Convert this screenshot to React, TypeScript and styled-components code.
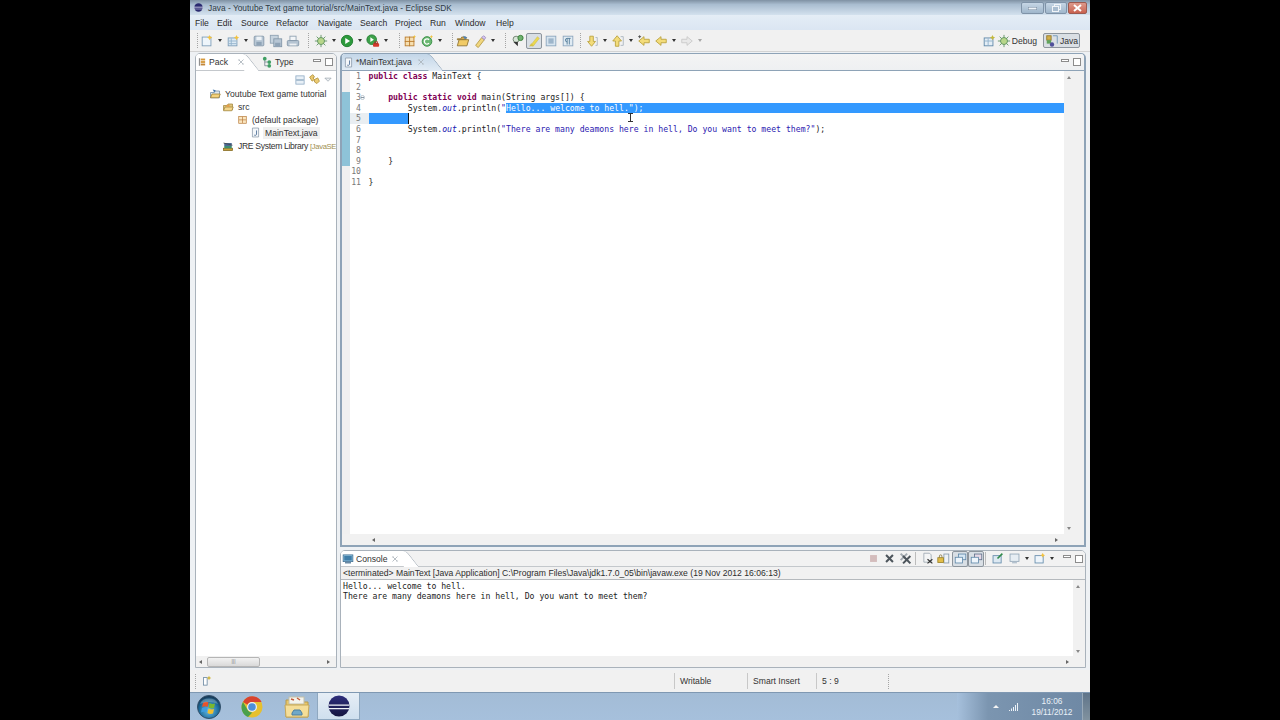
import React from "react";
import styled, { createGlobalStyle } from "styled-components";

const GlobalStyle = createGlobalStyle`
  html, body { margin: 0; padding: 0; background: #000; }
  body { font-family: "Liberation Sans", Arial, sans-serif; font-size: 8.6px; color: #333; }
  svg { flex: none; }
`;

const Screen = styled.div`
  width: 1280px;
  height: 720px;
  display: flex;
  justify-content: center;
  overflow: hidden;
`;

const Win = styled.div`
  width: 900px;
  height: 720px;
  display: flex;
  flex-direction: column;
  background: #f0f0f0;
`;

/* title bar */
const TitleBar = styled.div`
  height: 15px;
  display: flex;
  align-items: center;
  padding-left: 4px;
  gap: 5px;
  background: linear-gradient(#7f91a3, #a9bdd0 30%, #d3e1ee);
  color: #2f3a44;
`;

const TitleText = styled.span`
  flex: 1;
  font-size: 8.35px;
`;

const Controls = styled.div`
  display: flex;
  align-self: flex-start;
  gap: 1px;
  margin-right: 3px;
  margin-top: 2px;
`;

const Ctl = styled.div<{ $close?: boolean; $w: number }>`
  width: ${(p) => p.$w}px;
  height: 12px;
  box-sizing: border-box;
  display: flex;
  align-items: center;
  justify-content: center;
  border: 1px solid ${(p) => (p.$close ? "#9c5a50" : "#7f93a8")};
  border-radius: 2px;
  background: ${(p) => (p.$close ? "linear-gradient(#dd9a8c,#c9614f)" : "linear-gradient(#c6d6e5,#9fb6cb)")};
`;

const MenuBar = styled.div`
  height: 15px;
  display: flex;
  align-items: center;
  background: linear-gradient(#e4edf6, #dbe6f2);
  padding-left: 5px;
  color: #2b2b2b;
`;

const MenuItem = styled.span<{ $w: number }>`
  width: ${(p) => p.$w}px;
`;

/* toolbar */
const ToolBar = styled.div`
  height: 22px;
  display: flex;
  align-items: center;
  padding-left: 7px;
  background: #f1f1f1;
  border-bottom: 1px solid #d3d3d3;
  box-sizing: border-box;
`;

const ToolGroup = styled.div`
  display: flex;
  align-items: center;
  gap: 1px;
`;

const Slot = styled.div<{ $on?: boolean; $size?: number }>`
  width: ${(p) => p.$size ?? 16}px;
  height: 16px;
  display: flex;
  align-items: center;
  justify-content: center;
  flex: none;
  box-sizing: border-box;
  ${(p) => (p.$on ? "background:#d9dfe5;border:1px solid #8d959d;border-radius:2px;" : "")}
`;

const DropArrow = styled.div<{ $pale?: boolean }>`
  width: 8px;
  height: 16px;
  flex: none;
  display: flex;
  align-items: center;
  justify-content: center;

  &::before {
    content: "";
    border-left: 2.5px solid transparent;
    border-right: 2.5px solid transparent;
    border-top: 3px solid ${(p) => (p.$pale ? "#a8a8a8" : "#333")};
  }
`;

const Grip = styled.div<{ $l: number; $r: number }>`
  width: 1px;
  height: 15px;
  flex: none;
  box-sizing: border-box;
  margin: 0 ${(p) => p.$r}px 0 ${(p) => p.$l}px;
  border-left: 1px dotted #a5a5a5;
`;

const Perspectives = styled.div`
  margin-left: auto;
  margin-right: 10px;
  display: flex;
  align-items: center;
`;

const PerspLabel = styled.span`
  margin: 0 6px 0 1px;
  color: #333;
`;

const JavaButton = styled.div`
  width: 37px;
  height: 15px;
  display: flex;
  align-items: center;
  gap: 1px;
  padding-left: 1px;
  box-sizing: border-box;
  background: #dadfe4;
  border: 1px solid #8d959d;
  border-radius: 2px;
`;

/* panes */
const Work = styled.div`
  flex: 1;
  min-height: 0;
  display: flex;
  gap: 3px;
  padding: 1px 4px 2px 5px;
  background: #eef1f4;
`;

const Pane = styled.div`
  display: flex;
  flex-direction: column;
  box-sizing: border-box;
  border: 1px solid #a9b2bb;
  border-radius: 5px 5px 0 0;
  background: #fff;
  min-height: 0;
  overflow: hidden;
`;

const LeftPane = styled(Pane)`
  width: 142px;
  flex: none;
`;

const RightCol = styled.div`
  flex: 1;
  min-width: 0;
  display: flex;
  flex-direction: column;
  gap: 3px;
`;

const EditorPane = styled(Pane)`
  height: 494px;
  flex: none;
  border: 2px solid #8ea3b7;
  border-top-width: 1px;
`;

const ConsolePane = styled(Pane)`
  flex: 1;
`;

const TabStrip = styled.div<{ $h: number; $blue?: boolean }>`
  height: ${(p) => p.$h}px;
  flex: none;
  display: flex;
  align-items: center;
  box-sizing: border-box;
  background: ${(p) => (p.$blue ? "linear-gradient(#f4f4f4,#eef0f2)" : "#f2f2f2")};
  border-bottom: 1px solid ${(p) => (p.$blue ? "#8ea3b7" : "#c4c8cc")};
`;

const Tab = styled.div<{ $w: number; $pad?: number; $active?: boolean; $blue?: boolean }>`
  width: ${(p) => p.$w}px;
  height: 100%;
  flex: none;
  position: relative;
  z-index: 1;
  display: flex;
  align-items: center;
  gap: 2px;
  padding-left: ${(p) => p.$pad ?? 1}px;
  box-sizing: border-box;
  background: ${(p) =>
    p.$blue ? "linear-gradient(#c3d6e8,#e2ecf5)" : p.$active ? "#fff" : "transparent"};

  ${(p) =>
    p.$active
      ? `&::after {
    content: "";
    position: absolute;
    top: 0;
    bottom: -1px;
    right: -7px;
    width: 14px;
    transform: skewX(38deg);
    border-right: 1px solid ${p.$blue ? "#8ea3b7" : "#a9b2bb"};
    border-top-right-radius: 4px;
    background: ${p.$blue ? "linear-gradient(#c3d6e8,#e2ecf5)" : "#fff"};
    z-index: -1;
  }`
      : ""}
`;

const CloseX = styled.span<{ $ml: number }>`
  margin-left: ${(p) => p.$ml}px;
  display: flex;
`;

const PaneButtons = styled.div<{ $r: number }>`
  margin-left: auto;
  display: flex;
  align-items: center;
  gap: 4px;
  padding-right: ${(p) => p.$r}px;
`;

const MiniMin = styled.div`
  width: 8px;
  height: 3px;
  box-sizing: border-box;
  border: 1px solid #8c8c8c;
  background: #fff;
  margin-top: -4px;
`;

const MiniMax = styled.div`
  width: 8px;
  height: 8px;
  box-sizing: border-box;
  border: 1px solid #8c8c8c;
  background: #fff;
`;

const ViewBar = styled.div`
  height: 17px;
  flex: none;
  display: flex;
  align-items: center;
  justify-content: flex-end;
  padding-right: 2px;
`;

const Tree = styled.div`
  flex: 1;
  min-height: 0;
  overflow: hidden;
`;

const TreeRow = styled.div<{ $indent: number }>`
  height: 12.8px;
  display: flex;
  align-items: center;
  padding-left: ${(p) => p.$indent}px;
  gap: 2px;
  white-space: nowrap;
`;

const TreeLabel = styled.span<{ $selected?: boolean; $tight?: boolean }>`
  color: #333;
  padding: 1px ${(p) => (p.$tight ? 0 : 2)}px 1px 2px;
  letter-spacing: ${(p) => (p.$tight ? "-0.33px" : "normal")};
  background: ${(p) => (p.$selected ? "#f0f0f0" : "transparent")};
`;

const Decoration = styled.span`
  color: #a08f50;
  font-size: 7.6px;
`;

const HBar = styled.div`
  height: 11px;
  flex: none;
  display: flex;
  align-items: center;
  background: #f1f1f1;
  box-sizing: border-box;
`;

const ArrowH = styled.div<{ $dir: "l" | "r"; $ml?: number; $mr?: number }>`
  flex: none;
  margin-left: ${(p) => p.$ml ?? 0}px;
  margin-right: ${(p) => p.$mr ?? 0}px;
  border-top: 2.5px solid transparent;
  border-bottom: 2.5px solid transparent;
  ${(p) => (p.$dir === "l" ? "border-right: 3px solid #666;" : "border-left: 3px solid #666;")}
`;

const ArrowV = styled.div<{ $dir: "u" | "d" }>`
  flex: none;
  border-left: 2.5px solid transparent;
  border-right: 2.5px solid transparent;
  ${(p) => (p.$dir === "u" ? "border-bottom: 3px solid #888;" : "border-top: 3px solid #888;")}
`;

const Thumb = styled.div`
  width: 53px;
  height: 10px;
  margin-left: 5px;
  border: 1px solid #b5b5b5;
  border-radius: 2px;
  box-sizing: border-box;
  background: linear-gradient(#f2f2f2, #d9d9d9);
  display: flex;
  align-items: center;
  justify-content: center;
  font-size: 5px;
  line-height: 1;
  color: #777;
`;

/* editor */
const EditorBody = styled.div`
  flex: 1;
  min-height: 0;
  display: flex;
  position: relative;
`;

const EditorMain = styled.div`
  flex: 1;
  min-width: 0;
  display: flex;
  flex-direction: column;
`;

const EditorText = styled.div`
  flex: 1;
  min-height: 0;
  display: flex;
  position: relative;
`;

const Ruler = styled.div`
  width: 8px;
  flex: none;
  background: #f0f0f0;
  padding-top: 21px;
  box-sizing: border-box;
`;

const RulerBlock = styled.div`
  height: 74px;
  background: #8ec3d8;
`;

const Code = styled.div`
  flex: 1;
  min-width: 0;
  padding-top: 0.1px;
  font-family: "DejaVu Sans Mono", monospace;
  font-size: 8.17px;
  color: #222;
`;

const CodeRow = styled.div`
  height: 10.6px;
  line-height: 10.6px;
  display: flex;
  white-space: pre;
`;

const LineNo = styled.div<{ $current?: boolean }>`
  width: 18.5px;
  flex: none;
  box-sizing: border-box;
  padding-right: 7.5px;
  text-align: right;
  color: #787878;
  background: ${(p) => (p.$current ? "#e9eef2" : "transparent")};
  position: relative;
`;

const Fold = styled.span`
  position: absolute;
  right: 4px;
  top: 3px;
  width: 5px;
  height: 5px;
  box-sizing: border-box;
  border: 1px solid #b9c4ce;
  border-radius: 50%;

  &::before {
    content: "";
    position: absolute;
    left: 0;
    top: 1px;
    width: 3px;
    height: 1px;
    background: #8b98a4;
  }
`;

const LineText = styled.div`
  flex: none;
`;

const Kw = styled.span`
  color: #7f0055;
  font-weight: 700;
`;

const Str = styled.span`
  color: #2c20b0;
`;

const Out = styled.span`
  color: #2020b0;
  font-style: italic;
`;

const Selected = styled.div<{ $grow?: boolean }>`
  background: #3399ff;
  color: #fff;
  ${(p) => (p.$grow ? "flex: 1;" : "flex: none;")}
`;

const Caret = styled.div`
  width: 1px;
  background: #111;
  flex: none;
`;

const IBeam = styled.div`
  position: absolute;
  left: 286px;
  top: 42px;
  width: 5px;
  height: 9px;
  box-sizing: border-box;
  border-top: 1px solid #333;
  border-bottom: 1px solid #333;

  &::before {
    content: "";
    position: absolute;
    left: 2px;
    top: 0;
    bottom: 0;
    width: 1px;
    background: #333;
  }
`;

const VBar = styled.div<{ $w: number; $bottom: number }>`
  width: ${(p) => p.$w}px;
  flex: none;
  background: #f1f1f1;
  display: flex;
  flex-direction: column;
  align-items: flex-start;
  justify-content: space-between;
  padding: 5px 0 ${(p) => p.$bottom}px 3px;
  box-sizing: border-box;
`;

/* console */
const ConsoleTools = styled.div`
  flex: 1;
  display: flex;
  align-items: center;
  padding-left: 459px;
`;

const MiniSep = styled.div<{ $l: number; $r: number }>`
  width: 1px;
  height: 13px;
  flex: none;
  background: #bcbcbc;
  margin: 0 ${(p) => p.$r}px 0 ${(p) => p.$l}px;
`;

const Terminated = styled.div`
  height: 12px;
  flex: none;
  display: flex;
  align-items: center;
  padding-left: 2px;
  background: #f1f1f1;
  border-bottom: 1px solid #b5b9bd;
  color: #2d2d2d;
  white-space: nowrap;
`;

const ConsoleBody = styled.div`
  flex: 1;
  min-height: 0;
  display: flex;
`;

const ConsoleOut = styled.div`
  flex: 1;
  min-width: 0;
  padding: 0.5px 0 0 2px;
  font-family: "DejaVu Sans Mono", monospace;
  font-size: 8.17px;
  line-height: 10.6px;
  white-space: pre;
  color: #222;
`;

/* status */
const StatusBar = styled.div`
  height: 22px;
  flex: none;
  display: flex;
  align-items: center;
  background: #f1f1f1;
  padding-left: 5px;
`;

const StatusCell = styled.div<{ $left: number; $w: number }>`
  width: ${(p) => p.$w}px;
  height: 16px;
  box-sizing: border-box;
  display: flex;
  align-items: center;
  padding-left: 5px;
  margin-left: ${(p) => p.$left}px;
  border-left: 1px solid #c8c8c8;
  flex: none;
`;

/* taskbar */
const TaskBar = styled.div`
  height: 28px;
  flex: none;
  display: flex;
  align-items: center;
  background: linear-gradient(#a3bcd6, #a6c0dc);
  border-top: 1px solid #7f98b2;
  box-sizing: border-box;
`;

const TaskSlot = styled.div<{ $w: number; $active?: boolean }>`
  width: ${(p) => p.$w}px;
  height: 100%;
  flex: none;
  display: flex;
  align-items: center;
  justify-content: center;
  box-sizing: border-box;
  ${(p) =>
    p.$active
      ? "background: linear-gradient(#e6eef6,#cfdfee); border: 1px solid #8fa8c0; border-top: none;"
      : ""}
`;

const Tray = styled.div`
  margin-left: auto;
  width: 125px;
  height: 100%;
  display: flex;
  align-items: center;
  padding-left: 36px;
  box-sizing: border-box;
  background: linear-gradient(90deg, #a6c0dc, #7b95b0 25%, #6f89a5);
  color: #eaf1f8;
`;

const TrayTri = styled.div`
  border-left: 3px solid transparent;
  border-right: 3px solid transparent;
  border-bottom: 3px solid #f5f5f5;
`;

const SignalWrap = styled.span`
  margin-left: 9px;
  display: flex;
`;

const Clock = styled.div`
  margin-left: 9px;
  width: 46px;
  text-align: center;
  line-height: 11px;
  font-size: 8.3px;
`;

const ShowDesktop = styled.div`
  width: 8px;
  height: 100%;
  flex: none;
  background: linear-gradient(#5f7489, #81929f);
  border-left: 1px solid #98a9b8;
  box-sizing: border-box;
`;

const Spacer = styled.div`
  flex: 1;
`;

const Svg: React.FC<{ size?: number; children: React.ReactNode }> = ({ size = 14, children }) => (
  <svg width={size} height={size} viewBox="0 0 16 16">
    {children}
  </svg>
);

const ICONS: Record<string, React.ReactNode> = {
  newFile: (
    <>
      <rect x="2.5" y="3.5" width="10" height="10" fill="#eef5fb" stroke="#7d9db8" />
      <path d="M11 1l1 2 2 1-2 1-1 2-1-2-2-1 2-1z" fill="#f3c23f" />
    </>
  ),
  newTable: (
    <>
      <rect x="2.5" y="4.5" width="10" height="9" fill="#dbe9f4" stroke="#7d9db8" />
      <path d="M3 8h9M3 11h9M6 5v8" stroke="#92b2cc" />
      <path d="M12 1l1 2 2 1-2 1-1 2-1-2-2-1 2-1z" fill="#f3c23f" />
    </>
  ),
  save: (
    <>
      <rect x="2.5" y="2.5" width="11" height="11" rx="1" fill="#b7c6d4" stroke="#8296a8" />
      <rect x="5" y="3" width="6" height="4" fill="#eef3f7" />
      <rect x="5" y="9" width="6" height="4" fill="#8fa3b6" />
    </>
  ),
  saveAll: (
    <>
      <rect x="1.5" y="1.5" width="9" height="9" fill="#c6d3de" stroke="#8ea1b2" />
      <rect x="5.5" y="5.5" width="9" height="9" fill="#b7c6d4" stroke="#8296a8" />
      <rect x="7" y="10" width="6" height="4" fill="#8fa3b6" />
    </>
  ),
  print: (
    <>
      <rect x="4.5" y="2.5" width="7" height="5" fill="#f2f5f8" stroke="#8fa1b2" />
      <rect x="1.5" y="7.5" width="13" height="6" rx="1" fill="#b5c4d2" stroke="#8296a8" />
      <rect x="4" y="11" width="8" height="2" fill="#eef1f4" />
    </>
  ),
  bug: (
    <>
      <path d="M8 1v14M1 8h14M3 3l10 10M13 3L3 13" stroke="#5d9160" />
      <circle cx="8" cy="8" r="4" fill="#b7d68a" stroke="#5d9160" />
    </>
  ),
  run: (
    <>
      <circle cx="8" cy="8" r="6.5" fill="#2d9a3c" stroke="#1a7a2c" />
      <path d="M6 4.5l5.5 3.5L6 11.5z" fill="#fff" />
    </>
  ),
  ext: (
    <>
      <circle cx="6.5" cy="6.5" r="5.5" fill="#3da24a" stroke="#1f7a2f" />
      <path d="M5 3.8l4 2.7-4 2.7z" fill="#fff" />
      <rect x="8" y="10.5" width="7" height="4" rx="1" fill="#d23a2c" />
      <rect x="10" y="9" width="3" height="2" fill="none" stroke="#a82d22" />
    </>
  ),
  pkg: (
    <>
      <rect x="2.5" y="3.5" width="10" height="10" fill="#f6dfb0" stroke="#b97a2c" />
      <path d="M7.5 3v11M2 8.5h11" stroke="#b97a2c" />
      <path d="M13 1l.7 1.5L15 3l-1.3.6L13 5l-.7-1.4L11 3l1.3-.5z" fill="#efc23f" />
    </>
  ),
  newClass: (
    <>
      <circle cx="8" cy="8.5" r="5.5" fill="#6bb872" stroke="#2f8a3e" />
      <path d="M10.3 6.6a3 3 0 1 0 0 3.8" fill="none" stroke="#fff" strokeWidth="1.5" />
      <path d="M13 1l.7 1.5L15 3l-1.3.6L13 5l-.7-1.4L11 3l1.3-.5z" fill="#efc23f" />
    </>
  ),
  open: (
    <>
      <path d="M1.5 5.5h4l1-2h5v3h-10z" fill="#d3a750" stroke="#8e7434" />
      <path d="M1.5 13.5l2-7h11l-2 7z" fill="#f1cb66" stroke="#8e7434" />
      <path d="M8 2l5 2-3 2z" fill="#4b82b8" />
    </>
  ),
  torch: (
    <>
      <path d="M3 13l7-9 3 2.5-7 9z" fill="#f1d77f" stroke="#b69a45" />
      <path d="M10 4l2-2 2.5 2-1.5 2.5z" fill="#d8c7f0" stroke="#9b8ec2" />
    </>
  ),
  lookup: (
    <>
      <circle cx="7" cy="6" r="3.5" fill="#d8e4d8" stroke="#677a67" />
      <path d="M4 9l5 5V9z" fill="#333" />
      <circle cx="12" cy="4.5" r="3" fill="#6fb26f" stroke="#357a35" />
    </>
  ),
  mark: <path d="M4 13l8-10 2 2-7 9zM3 14l2-3 2 2z" fill="#ecd94f" stroke="#c4b23c" strokeWidth="0.5" />,
  block: (
    <>
      <rect x="2.5" y="2.5" width="11" height="11" fill="#d6e4ef" stroke="#8aa5bd" />
      <rect x="5" y="5" width="6" height="6" fill="#9db5ca" />
    </>
  ),
  para: (
    <>
      <rect x="2.5" y="2.5" width="11" height="11" fill="#e0ebf3" stroke="#8aa5bd" />
      <path d="M7 5h4M7 5v7M9.5 5v7M7 5a2 2 0 0 0 0 4" stroke="#4e7896" fill="none" />
    </>
  ),
  nextAnn: (
    <>
      <path d="M5.500 2.500h4v6H12L7.500 14 3 8.500h2.500z" fill="#f3dc7a" stroke="#b9a13d" />
      <path d="M12 4h2v9h-2" fill="none" stroke="#a9b5bf" />
    </>
  ),
  prevAnn: (
    <>
      <path d="M5 14V8H2l5-6 5 6H9v6z" fill="#f3dc7a" stroke="#b9a13d" />
      <path d="M11 3h3v10h-3" fill="none" stroke="#a9b5bf" />
    </>
  ),
  lastEdit: (
    <>
      <path d="M2 8l6-5v3h6v4H8v3z" fill="#f3dc7a" stroke="#b9a13d" />
      <path d="M3 1l.8 1.4L5 3l-1.200.7L3 5l-.8-1.300L1 3l1.200-.6z" fill="#555" />
    </>
  ),
  back: <path d="M2 8l6-5v3h6v4H8v3z" fill="#f3dc7a" stroke="#b9a13d" />,
  forward: <path d="M14 8L8 3v3H2v4h6v3z" fill="#e8e8e8" stroke="#c8c8c8" />,
  perspective: (
    <>
      <rect x="2.500" y="4.500" width="10" height="9" fill="#e4eef6" stroke="#5e86a8" />
      <path d="M3 8h9M7 5v8" stroke="#8fb0ca" />
      <path d="M12 1l1 2 2 1-2 1-1 2-1-2-2-1 2-1z" fill="#c5b93c" />
    </>
  ),
  java: (
    <>
      <rect x="2" y="2" width="5" height="5" fill="#d2b04a" stroke="#94772a" />
      <rect x="2" y="7" width="5" height="4" fill="#62a35c" />
      <circle cx="8" cy="12" r="2.500" fill="#4f4f9a" />
      <path d="M9 2h5v9" fill="none" stroke="#6d94b5" />
    </>
  ),
  packIcon: (
    <>
      <rect x="3" y="2" width="2" height="12" fill="#8f8f8f" />
      <rect x="6" y="2.500" width="7" height="3" fill="#d69a3d" />
      <rect x="6" y="6.500" width="7" height="3" fill="#d69a3d" />
      <rect x="6" y="10.500" width="7" height="3" fill="#c2873a" />
    </>
  ),
  typeIcon: (
    <>
      <path d="M5 4v9h4M5 8h4" fill="none" stroke="#6b7d88" />
      <circle cx="5" cy="3.500" r="2.500" fill="#3f9f64" />
      <circle cx="11" cy="8" r="2.500" fill="#3f9f64" />
      <circle cx="11" cy="13" r="2.500" fill="#3f9f64" />
    </>
  ),
  javaFile: (
    <>
      <path d="M3.500 1.500h9v13h-9z" fill="#f4f7fa" stroke="#7f8fa0" />
      <path d="M9.500 5v5.500a2 2 0 0 1-3.500 1" fill="none" stroke="#4f6f96" strokeWidth="1.300" />
    </>
  ),
  x: <path d="M4 4l8 8M12 4l-8 8M5.500 4l-1.500 1.500M12 10.500L10.500 12" stroke="#a9b1b9" strokeWidth="1.300" />,
  collapse: (
    <>
      <rect x="2.500" y="2.500" width="11" height="11" fill="#e8f0f7" stroke="#88a5bf" />
      <path d="M3 8h10" stroke="#6f90ad" strokeWidth="1.500" />
    </>
  ),
  link: (
    <>
      <path d="M2 5l4-3 2 3-2 1 2 2-3 2z" fill="#eccb72" stroke="#b0903a" />
      <path d="M8 8l4-2 2 4-3 3-3-2z" fill="#eccb72" stroke="#b0903a" />
    </>
  ),
  viewMenu: <path d="M3 5h10L8 10z" fill="#eef1f4" stroke="#8c96a0" />,
  project: (
    <>
      <path d="M2 6h5l1-2h6v9H2z" fill="#dfe8ef" stroke="#6b87a0" />
      <path d="M2 13l2-5h11l-2 5z" fill="#f4d27c" stroke="#9a7d30" />
      <path d="M5 2l4 1-2 3z" fill="#3f74ab" />
    </>
  ),
  src: (
    <>
      <path d="M2 6h5l1-2h6v8H2z" fill="#e0c47c" stroke="#a2873f" />
      <path d="M2 13l2-5h11l-2 5z" fill="#f4d68c" stroke="#a2873f" />
      <rect x="6" y="5" width="4" height="3" fill="#e3a04c" />
    </>
  ),
  pkgTree: (
    <>
      <rect x="2.500" y="3.500" width="11" height="10" fill="#fae6c0" stroke="#b7793a" />
      <path d="M8 4v9M3 8.500h10" stroke="#b7793a" />
    </>
  ),
  library: (
    <>
      <rect x="2" y="11" width="12" height="3" fill="#caa134" stroke="#80651c" />
      <rect x="3" y="8" width="10" height="3" fill="#3f8f6f" />
      <rect x="3" y="4" width="10" height="4" fill="#4b6a96" />
      <path d="M2 4l12 3" stroke="#444" />
    </>
  ),
  console: (
    <>
      <rect x="1.500" y="2.500" width="13" height="9" fill="#8ec0de" stroke="#3f6d8f" />
      <rect x="3" y="4" width="10" height="6" fill="#3f7da8" />
      <rect x="4" y="12" width="8" height="2" fill="#6a8aa5" />
    </>
  ),
  stop: <rect x="3" y="3" width="10" height="10" fill="#d3bcbc" />,
  removeOne: <path d="M3 3l10 10M13 3L3 13" stroke="#4d555c" strokeWidth="3" />,
  removeAll: (
    <>
      <path d="M2 2l8 8M10 2L2 10" stroke="#a4abb1" strokeWidth="2.500" />
      <path d="M5 5l9 9M14 5l-9 9" stroke="#4d555c" strokeWidth="2.500" />
    </>
  ),
  clearDoc: (
    <>
      <path d="M3.500 1.500h7l2 2v9h-9z" fill="#f4f5f6" stroke="#9aa5af" />
      <path d="M8 9l6 5M14 9l-6 5" stroke="#333" strokeWidth="1.500" />
    </>
  ),
  lockDoc: (
    <>
      <rect x="8.500" y="2.500" width="6" height="11" fill="#eef2f5" stroke="#8296a8" />
      <rect x="1" y="7" width="7" height="6" fill="#e3bd47" stroke="#9a8128" />
      <path d="M3 7V5a1.500 1.500 0 0 1 3 0v2" fill="none" stroke="#8a7a44" />
    </>
  ),
  showOut: (
    <>
      <rect x="5.500" y="2.500" width="9" height="7" fill="#d6e7f4" stroke="#5f87a8" />
      <rect x="1.500" y="6.500" width="9" height="7" fill="#eef5fb" stroke="#5f87a8" />
    </>
  ),
  showErr: (
    <>
      <rect x="5.500" y="2.500" width="9" height="7" fill="#e6d9e6" stroke="#5f6f88" />
      <rect x="1.500" y="6.500" width="9" height="7" fill="#eef5fb" stroke="#5f87a8" />
    </>
  ),
  pin: (
    <>
      <rect x="2.500" y="4.500" width="10" height="9" fill="#dde9f2" stroke="#5f87a8" />
      <path d="M8 8l6-6" stroke="#2f8a4a" strokeWidth="2" />
    </>
  ),
  display: (
    <>
      <rect x="2.500" y="2.500" width="11" height="9" fill="#e6edf3" stroke="#8ea3b5" />
      <rect x="5" y="12" width="6" height="2" fill="#b5c3cf" />
    </>
  ),
  openConsole: (
    <>
      <rect x="2.500" y="4.500" width="10" height="9" fill="#eef5fb" stroke="#5f87a8" />
      <path d="M12 1l1 2 2 1-2 1-1 2-1-2-2-1 2-1z" fill="#f3c23f" />
    </>
  ),
  fastView: (
    <>
      <rect x="4.500" y="3.500" width="5" height="10" fill="#fff" stroke="#5f7f9a" />
      <path d="M12 1l1 2 2 1-2 1-1 2-1-2-2-1 2-1z" fill="#cfb53b" />
    </>
  ),
};

const Icon: React.FC<{ name: string; size?: number }> = ({ name, size }) => <Svg size={size}>{ICONS[name]}</Svg>;

const Tool: React.FC<{ name: string; on?: boolean; size?: number; slot?: number }> = ({ name, on, size, slot }) => (
  <Slot $on={on} $size={slot}>
    <Icon name={name} size={size} />
  </Slot>
);

const Orb = () => (
  <svg width="24" height="24" viewBox="0 0 24 24">
    <defs>
      <radialGradient id="orb" cx="50%" cy="65%" r="60%">
        <stop offset="0" stopColor="#6ec0e8" />
        <stop offset="0.7" stopColor="#1c6c9c" />
        <stop offset="1" stopColor="#173a58" />
      </radialGradient>
    </defs>
    <circle cx="12" cy="12" r="11.500" fill="url(#orb)" stroke="#33506a" />
    <path d="M6 8q3-2 5.500-.5l-1 4.500Q8 10.500 5 12z" fill="#e8532b" />
    <path d="M12.500 8q3 1.500 5.500.5l-1 4.500q-3 1-5.500-.5z" fill="#7ab82e" />
    <path d="M5 13q3-1.500 5.500 0l-1 4.500Q7 16 4 17.500z" fill="#3f9ee0" />
    <path d="M11.500 13.500q3 1.500 5.500.5l-1 4.500q-3 1-5.500-.5z" fill="#f4c02c" />
    <path d="M3 9a9.500 8 0 0 1 18 0Q12 5 3 9z" fill="#fff" opacity="0.25" />
  </svg>
);

const Chrome = () => (
  <svg width="22" height="22" viewBox="0 0 22 22">
    <circle cx="11" cy="11" r="10.500" fill="#e6c02f" />
    <path d="M2 6a10.500 10.500 0 0 1 18.600 0H11a5 5 0 0 0-4.500 2.800z" fill="#d8432f" />
    <path d="M2 6l4.700 8a5 5 0 0 0 4.600 2.500L7 21A10.500 10.500 0 0 1 2 6z" fill="#4aa04a" />
    <circle cx="11" cy="11" r="5" fill="#eaf0f5" />
    <circle cx="11" cy="11" r="3.800" fill="#4d8fd8" />
  </svg>
);

const Folder = () => (
  <svg width="26" height="24" viewBox="0 0 26 24">
    <path d="M2 5h9l2 2h11v15H2z" fill="#e8c768" stroke="#b89a4a" />
    <rect x="5" y="2" width="15" height="7" fill="#f4f4ee" stroke="#c4c0a8" />
    <path d="M7 4l3 1M13 3l3 2" stroke="#c25a3a" strokeWidth="1.500" />
    <path d="M1 10h24l-1 12H2z" fill="#f5de98" stroke="#c6a85a" />
    <path d="M8 18l2-3h6l2 3v2H8z" fill="#6fa8c8" stroke="#4c7f9e" />
  </svg>
);

const EclipseLogo = () => (
  <svg width="22" height="22" viewBox="0 0 22 22">
    <defs>
      <linearGradient id="ecl" x1="0" y1="0" x2="0" y2="1">
        <stop offset="0" stopColor="#2f2f7d" />
        <stop offset="1" stopColor="#14143f" />
      </linearGradient>
    </defs>
    <circle cx="11" cy="11" r="10.500" fill="url(#ecl)" />
    <path d="M0.800 9.500h20.400v1.200H0.800zM1 13h20v1.200H1z" fill="#f1f3f8" />
  </svg>
);

const Signal = () => (
  <svg width="12" height="10" viewBox="0 0 12 10">
    <path d="M1 8h1v1H1zM3 6.500h1V9H3zM5 5h1v4H5zM7 3h1v6H7zM9 1h1v8H9z" fill="#eef3f8" />
  </svg>
);

const MENU: [string, number][] = [
  ["File", 22],
  ["Edit", 24],
  ["Source", 35],
  ["Refactor", 42],
  ["Navigate", 42],
  ["Search", 35],
  ["Project", 35],
  ["Run", 25],
  ["Window", 41],
  ["Help", 30],
];

const App: React.FC = () => {
  return (
    <Screen>
      <GlobalStyle />
      <Win>
        <TitleBar>
          <svg width="9" height="9" viewBox="0 0 16 16">
            <circle cx="8" cy="8" r="7.500" fill="#2a2a70" />
            <path d="M0 6.500h16V8H0zM0 10h16v1H0z" fill="#eef" />
          </svg>
          <TitleText>Java - Youtube Text game tutorial/src/MainText.java - Eclipse SDK</TitleText>
          <Controls>
            <Ctl $w={23}>
              <svg width="9" height="3">
                <rect width="9" height="3" fill="#eef3f8" stroke="#6f8399" />
              </svg>
            </Ctl>
            <Ctl $w={22}>
              <svg width="9" height="8">
                <rect x="2.500" y="0.500" width="6" height="5" fill="none" stroke="#f0f4f8" />
                <rect x="0.500" y="2.500" width="6" height="5" fill="#a9bdd0" stroke="#f0f4f8" />
              </svg>
            </Ctl>
            <Ctl $close $w={19}>
              <svg width="9" height="8">
                <path d="M1 1l7 6M8 1L1 7" stroke="#fff" strokeWidth="2" />
              </svg>
            </Ctl>
          </Controls>
        </TitleBar>
        <MenuBar>
          {MENU.map(([label, w]) => (
            <MenuItem key={label} $w={w}>
              {label}
            </MenuItem>
          ))}
        </MenuBar>
        <ToolBar>
          <Grip $l={0} $r={1} />
          <ToolGroup>
            <Tool name="newFile" />
            <DropArrow />
            <Tool name="newTable" />
            <DropArrow />
            <Tool name="save" />
            <Tool name="saveAll" />
            <Tool name="print" />
          </ToolGroup>
          <Grip $l={7} $r={4} />
          <ToolGroup>
            <Tool name="bug" />
            <DropArrow />
            <Tool name="run" />
            <DropArrow />
            <Tool name="ext" />
            <DropArrow />
          </ToolGroup>
          <Grip $l={9} $r={2} />
          <ToolGroup>
            <Tool name="pkg" />
            <Tool name="newClass" />
            <DropArrow />
          </ToolGroup>
          <Grip $l={8} $r={2} />
          <ToolGroup>
            <Tool name="open" />
            <Tool name="torch" />
            <DropArrow />
          </ToolGroup>
          <Grip $l={8} $r={3} />
          <ToolGroup>
            <Tool name="lookup" />
            <Tool name="mark" on />
            <Tool name="block" />
            <Tool name="para" />
          </ToolGroup>
          <Grip $l={4} $r={3} />
          <ToolGroup>
            <Tool name="nextAnn" />
            <DropArrow />
            <Tool name="prevAnn" />
            <DropArrow />
            <Tool name="lastEdit" />
            <Tool name="back" />
            <DropArrow />
            <Tool name="forward" />
            <DropArrow $pale />
          </ToolGroup>
          <Perspectives>
            <Tool name="perspective" />
            <Icon name="bug" />
            <PerspLabel>Debug</PerspLabel>
            <JavaButton>
              <Icon name="java" />
              <span>Java</span>
            </JavaButton>
          </Perspectives>
        </ToolBar>
        <Work>
          <LeftPane>
            <TabStrip $h={17}>
              <Tab $w={50} $active>
                <Icon name="packIcon" size={10} />
                <span>Pack</span>
                <CloseX $ml={6}>
                  <Icon name="x" size={10} />
                </CloseX>
              </Tab>
              <Tab $w={52} $pad={15}>
                <Icon name="typeIcon" size={12} />
                <span>Type</span>
              </Tab>
              <PaneButtons $r={3}>
                <MiniMin />
                <MiniMax />
              </PaneButtons>
            </TabStrip>
            <ViewBar>
              <Tool name="collapse" size={12} slot={15} />
              <Tool name="link" size={13} slot={15} />
              <Tool name="viewMenu" size={10} slot={12} />
            </ViewBar>
            <Tree>
              <TreeRow $indent={13}>
                <Icon name="project" size={12} />
                <TreeLabel>Youtube Text game tutorial</TreeLabel>
              </TreeRow>
              <TreeRow $indent={26}>
                <Icon name="src" size={12} />
                <TreeLabel>src</TreeLabel>
              </TreeRow>
              <TreeRow $indent={41}>
                <Icon name="pkgTree" size={11} />
                <TreeLabel>(default package)</TreeLabel>
              </TreeRow>
              <TreeRow $indent={54}>
                <Icon name="javaFile" size={11} />
                <TreeLabel $selected>MainText.java</TreeLabel>
              </TreeRow>
              <TreeRow $indent={26}>
                <Icon name="library" size={12} />
                <TreeLabel $tight>
                  JRE System Library <Decoration>[JavaSE</Decoration>
                </TreeLabel>
              </TreeRow>
            </Tree>
            <HBar>
              <ArrowH $dir="l" $ml={3} />
              <Thumb>|||</Thumb>
              <Spacer />
              <ArrowH $dir="r" $mr={6} />
            </HBar>
          </LeftPane>
          <RightCol>
            <EditorPane>
              <TabStrip $h={17} $blue>
                <Tab $w={88} $active $blue>
                  <Icon name="javaFile" size={11} />
                  <span>*MainText.java</span>
                  <CloseX $ml={2}>
                    <Icon name="x" size={10} />
                  </CloseX>
                </Tab>
                <PaneButtons $r={3}>
                  <MiniMin />
                  <MiniMax />
                </PaneButtons>
              </TabStrip>
              <EditorBody>
                <EditorMain>
                  <EditorText>
                    <Ruler>
                      <RulerBlock />
                    </Ruler>
                    <Code>
                      <CodeRow>
                        <LineNo>1</LineNo>
                        <LineText>
                          <Kw>public class</Kw> MainText {"{"}
                        </LineText>
                      </CodeRow>
                      <CodeRow>
                        <LineNo>2</LineNo>
                      </CodeRow>
                      <CodeRow>
                        <LineNo>
                          3<Fold />
                        </LineNo>
                        <LineText>
                          {"    "}
                          <Kw>public static void</Kw> main(String args[]) {"{"}
                        </LineText>
                      </CodeRow>
                      <CodeRow>
                        <LineNo>4</LineNo>
                        <LineText>
                          {"        "}System.<Out>out</Out>.println(<Str>"</Str>
                        </LineText>
                        <Selected $grow>Hello... welcome to hell.");</Selected>
                      </CodeRow>
                      <CodeRow>
                        <LineNo $current>5</LineNo>
                        <Selected>{"        "}</Selected>
                        <Caret />
                      </CodeRow>
                      <CodeRow>
                        <LineNo>6</LineNo>
                        <LineText>
                          {"        "}System.<Out>out</Out>.println(
                          <Str>"There are many deamons here in hell, Do you want to meet them?"</Str>);
                        </LineText>
                      </CodeRow>
                      <CodeRow>
                        <LineNo>7</LineNo>
                      </CodeRow>
                      <CodeRow>
                        <LineNo>8</LineNo>
                      </CodeRow>
                      <CodeRow>
                        <LineNo>9</LineNo>
                        <LineText>{"    }"}</LineText>
                      </CodeRow>
                      <CodeRow>
                        <LineNo>10</LineNo>
                      </CodeRow>
                      <CodeRow>
                        <LineNo>11</LineNo>
                        <LineText>{"}"}</LineText>
                      </CodeRow>
                    </Code>
                    <IBeam />
                  </EditorText>
                  <HBar>
                    <ArrowH $dir="l" $ml={30} />
                    <Spacer />
                    <ArrowH $dir="r" $mr={6} />
                  </HBar>
                </EditorMain>
                <VBar $w={20} $bottom={15}>
                  <ArrowV $dir="u" />
                  <ArrowV $dir="d" />
                </VBar>
              </EditorBody>
            </EditorPane>
            <ConsolePane>
              <TabStrip $h={16}>
                <Tab $w={65} $active>
                  <Icon name="console" size={12} />
                  <span>Console</span>
                  <CloseX $ml={0}>
                    <Icon name="x" size={10} />
                  </CloseX>
                </Tab>
                <ConsoleTools>
                  <Tool name="stop" size={11} />
                  <Tool name="removeOne" size={11} />
                  <Tool name="removeAll" size={13} />
                  <MiniSep $l={2} $r={3} />
                  <Tool name="clearDoc" size={13} />
                  <Tool name="lockDoc" size={13} slot={17} />
                  <Tool name="showOut" size={13} on />
                  <Tool name="showErr" size={13} on />
                  <MiniSep $l={1} $r={3} />
                  <Tool name="pin" size={13} />
                  <Tool name="display" size={13} slot={18} />
                  <DropArrow />
                  <Tool name="openConsole" size={13} slot={17} />
                  <DropArrow />
                  <PaneButtons $r={2}>
                    <MiniMin />
                    <MiniMax />
                  </PaneButtons>
                </ConsoleTools>
              </TabStrip>
              <Terminated>
                &lt;terminated&gt; MainText [Java Application] C:\Program Files\Java\jdk1.7.0_05\bin\javaw.exe (19 Nov 2012
                16:06:13)
              </Terminated>
              <ConsoleBody>
                <EditorMain>
                  <ConsoleOut>
                    {"Hello... welcome to hell.\nThere are many deamons here in hell, Do you want to meet them?"}
                  </ConsoleOut>
                  <HBar>
                    <Spacer />
                    <ArrowH $dir="r" $mr={4} />
                  </HBar>
                </EditorMain>
                <VBar $w={12} $bottom={14}>
                  <ArrowV $dir="u" />
                  <ArrowV $dir="d" />
                </VBar>
              </ConsoleBody>
            </ConsolePane>
          </RightCol>
        </Work>
        <StatusBar>
          <Grip $l={0} $r={4} />
          <Icon name="fastView" size={12} />
          <StatusCell $left={462} $w={73}>
            Writable
          </StatusCell>
          <StatusCell $left={0} $w={69}>
            Smart Insert
          </StatusCell>
          <StatusCell $left={0} $w={72}>
            5 : 9
          </StatusCell>
          <Grip $l={0} $r={0} />
        </StatusBar>
        <TaskBar>
          <TaskSlot $w={38}>
            <Orb />
          </TaskSlot>
          <TaskSlot $w={48}>
            <Chrome />
          </TaskSlot>
          <TaskSlot $w={41}>
            <Folder />
          </TaskSlot>
          <TaskSlot $w={43} $active>
            <EclipseLogo />
          </TaskSlot>
          <Tray>
            <TrayTri />
            <SignalWrap>
              <Signal />
            </SignalWrap>
            <Clock>
              16:06
              <br />
              19/11/2012
            </Clock>
          </Tray>
          <ShowDesktop />
        </TaskBar>
      </Win>
    </Screen>
  );
};

export default App;
